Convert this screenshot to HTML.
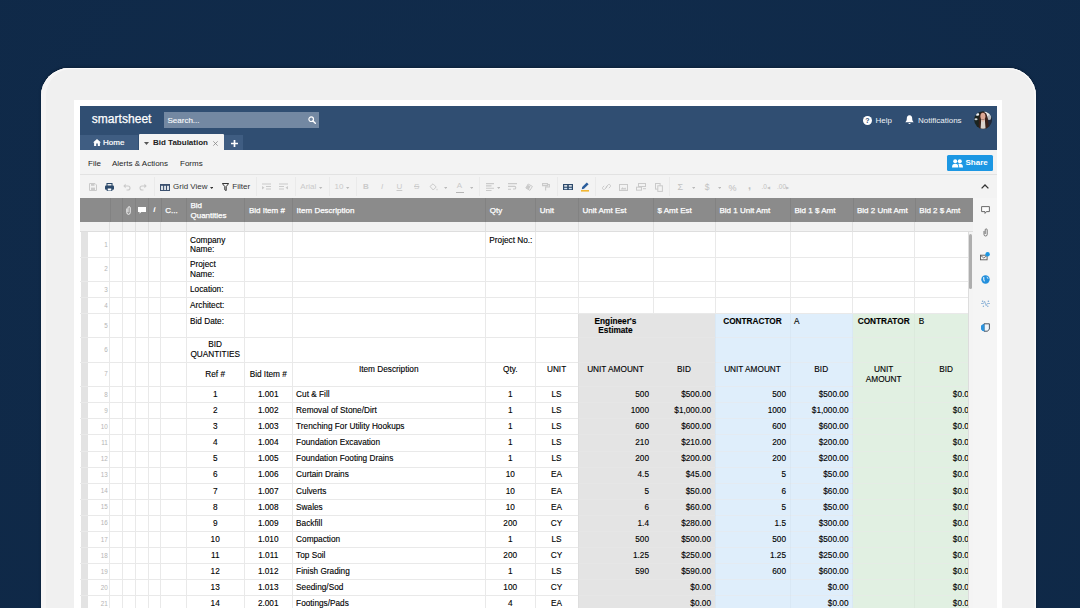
<!DOCTYPE html><html><head><meta charset="utf-8"><title>Smartsheet Bid Tabulation</title><style>
*{box-sizing:border-box;margin:0;padding:0}
html,body{width:1080px;height:608px;overflow:hidden}
body{position:relative;font-family:"Liberation Sans",Arial,sans-serif;background:#0f2947;background-image:radial-gradient(ellipse 1100px 900px at 50% 35%,#112c4c 0%,#0e2745 100%);}
.abs{position:absolute}
#frame{position:absolute;left:41px;top:68px;width:995px;height:600px;background:#f0f0f0;border-radius:28px;box-shadow:inset 0 1px 0 0 #fbfbfb,inset 5px 0 0 0 #f6f5f5,inset -1.5px 0 0 0 #fafafa,0 -1px 3px rgba(0,0,0,.25)}
#white{position:absolute;left:74px;top:99.5px;width:928px;height:520px;background:#fff}
#app{position:absolute;left:80px;top:106px;width:917px;height:510px;background:#fff;overflow:hidden}
/* inside app coordinates are page coords minus (80,106) */
#hdr{position:absolute;left:0;top:0;width:917px;height:44px;background:#304e72}
#logo{position:absolute;left:11.8px;top:6.3px;color:#fff;font-size:12px;letter-spacing:0.03px;line-height:14px;white-space:nowrap;-webkit-text-stroke:0.25px #fff}
#search{position:absolute;left:84px;top:6px;width:155px;height:16px;background:#7388a2;color:#f6f8fa;font-size:8px;line-height:17px;padding-left:3.5px;-webkit-text-stroke:0.15px #f6f8fa}
.tab{position:absolute;font-size:8px;line-height:16px;white-space:nowrap}
#menubar{position:absolute;left:0;top:44px;width:917px;height:25px;background:#f3f3f3;border-bottom:1px solid #e2e2e2}
#toolbar{position:absolute;left:0;top:69px;width:917px;height:22.5px;background:#f3f3f3}
.mi{position:absolute;top:0.5px;font-size:8px;line-height:25px;color:#262626}
.tsep{position:absolute;top:2px;width:1px;height:19px;background:#eaeaea}
.tt{position:absolute;font-size:8px;line-height:22px;top:1px;white-space:nowrap}
#ghead{position:absolute;left:0;top:91.5px;width:893px;height:24.5px;background:#8b8b8b}
.hc{position:absolute;top:0;height:24.5px;color:#fff;font-size:8px;line-height:10px;display:flex;align-items:center;padding-left:4px;padding-top:2.6px;white-space:nowrap;-webkit-text-stroke:0.25px #fff}
.hsep{position:absolute;top:0;width:1px;height:24.5px;background:#828282}
#side{position:absolute;left:893px;top:91.5px;width:24px;height:430px;background:#f5f5f5}
#grid{position:absolute;left:0;top:116px;width:887.5px;height:400px;background:#fff;overflow:hidden}
.c{position:absolute;font-size:8.25px;line-height:9.4px;color:#000;-webkit-text-stroke:0.12px #000;white-space:nowrap}
.rn{position:absolute;left:8px;width:21.9px;text-align:right;padding-right:2.2px;font-size:6.3px;color:#b4b4b4}
.vl{position:absolute;top:0;width:1px;height:400px;background:#e9e9e9}
.hl{position:absolute;left:0;height:1px;width:888px;background:#e9e9e9}
</style></head><body>
<div id="frame"></div><div id="white"></div><div id="app">
<div id="hdr">
<div id="logo">smartsheet</div>
<div id="search">Search...<svg class="abs" style="right:3.5px;top:4px" width="8" height="8" viewBox="0 0 8 8"><circle cx="3.2" cy="3.2" r="2.3" fill="none" stroke="#fff" stroke-width="1.2"/><path d="M5 5L7.3 7.3" stroke="#fff" stroke-width="1.4" stroke-linecap="round"/></svg></div>
<div class="abs" style="left:0;top:29px;width:58px;height:15px;background:#3f5d82"></div>
<svg class="abs" style="left:12.5px;top:32.5px" width="8" height="7" viewBox="0 0 8 7"><path d="M4 0L0 3.6H1.1V7H3.2V4.6H4.8V7H6.9V3.6H8Z" fill="#fff"/></svg>
<div class="tab" style="left:23px;top:29px;color:#fff;-webkit-text-stroke:0.2px #fff">Home</div>
<div class="abs" style="left:58.5px;top:28px;width:85px;height:16px;background:#f3f3f3;border-radius:1px 1px 0 0"></div>
<svg class="abs" style="left:64px;top:35.5px" width="5" height="3" viewBox="0 0 5 3"><path d="M0 0H5L2.5 3Z" fill="#555"/></svg>
<div class="tab" style="left:73px;top:29px;color:#222;font-weight:bold">Bid Tabulation</div>
<svg class="abs" style="left:132.5px;top:34.5px" width="5" height="5" viewBox="0 0 5 5"><path d="M0.3 0.3L4.7 4.7M4.7 0.3L0.3 4.7" stroke="#888" stroke-width="0.8"/></svg>
<div class="abs" style="left:144px;top:29px;width:19px;height:15px;background:#3f5d82"></div>
<svg class="abs" style="left:150.5px;top:33.5px" width="7" height="7" viewBox="0 0 7 7"><path d="M3.5 0V7M0 3.5H7" stroke="#fff" stroke-width="1.7"/></svg>
<svg class="abs" style="left:783px;top:9.5px" width="9" height="9" viewBox="0 0 9 9"><circle cx="4.5" cy="4.5" r="4.5" fill="#fff"/><text x="4.5" y="7.2" font-size="7" font-weight="bold" text-anchor="middle" fill="#304e72" font-family="Liberation Sans,sans-serif">?</text></svg>
<div class="tab" style="left:795.5px;top:6.5px;color:#edf1f5">Help</div>
<svg class="abs" style="left:825px;top:9px" width="9" height="10" viewBox="0 0 9 10"><path d="M4.5 0.3C2.6 0.3 1.8 1.8 1.8 3.6C1.8 5.6 1.2 6.4 0.3 7.3H8.7C7.8 6.4 7.2 5.6 7.2 3.6C7.2 1.8 6.4 0.3 4.5 0.3ZM3.4 8A1.1 1.1 0 0 0 5.6 8Z" fill="#fff"/></svg>
<div class="tab" style="left:838px;top:6.5px;color:#edf1f5">Notifications</div>
<svg class="abs" style="left:893.7px;top:4.9px" width="18" height="18" viewBox="0 0 18 18"><defs><clipPath id="av"><circle cx="9" cy="9" r="8.8"/></clipPath></defs><g clip-path="url(#av)"><rect width="18" height="18" fill="#1b2420"/><rect x="11" y="8" width="7" height="10" fill="#232a3c"/><ellipse cx="13.5" cy="3.2" rx="4.2" ry="3.6" fill="#e9ecef"/><ellipse cx="15.2" cy="6.5" rx="2" ry="2.5" fill="#b8bcc0"/><ellipse cx="3.4" cy="3.4" rx="1.7" ry="1.4" fill="#f2f4f6"/><ellipse cx="2" cy="8.2" rx="1.6" ry="1" fill="#cfd3d6"/><path d="M5.2 18C4.2 12 5 5 6.2 2.6C7.4 0.6 11 0.4 12.2 2.6C13.8 5.5 14.4 12 14.8 18Z" fill="#3a211b"/><ellipse cx="8.9" cy="5.2" rx="2.5" ry="3.5" fill="#dba794"/><path d="M7.2 8.2C8 9.2 10 9.2 10.8 8L11.6 18H6.6Z" fill="#d9d2cc"/><path d="M7.4 8.4C8.2 9.4 9.8 9.4 10.6 8.2L10 10.5H8Z" fill="#e6b8a6"/></g></svg>
</div>
<div id="menubar">
<div class="mi" style="left:8px">File</div><div class="mi" style="left:32px">Alerts &amp; Actions</div><div class="mi" style="left:100px">Forms</div>
<div class="abs" style="left:867px;top:5px;width:46px;height:16px;background:#1c97e3;border-radius:1.5px"></div>
<svg class="abs" style="left:872px;top:8.5px" width="11" height="9" viewBox="0 0 11 9"><circle cx="3.2" cy="2.2" r="2" fill="#fff"/><path d="M0 8.5C0 5.8 1.2 4.8 3.2 4.8C5.2 4.8 6.4 5.8 6.4 8.5Z" fill="#fff"/><circle cx="7.8" cy="2.2" r="2" fill="#fff"/><path d="M6.2 4.9C6.7 4.8 7.2 4.8 7.8 4.8C9.8 4.8 11 5.8 11 8.5H7.2C7.2 6.8 6.9 5.6 6.2 4.9Z" fill="#fff"/></svg>
<div class="abs" style="left:885.5px;top:5px;font-size:8px;line-height:16px;color:#fff;font-weight:bold">Share</div>
</div>
<div id="toolbar">
<svg class="abs" style="left:9.00px;top:8.20px" width="8" height="8" viewBox="0 0 8 8"><path d="M0.5 0.5H6L7.5 2V7.5H0.5Z" fill="none" stroke="#cacaca" stroke-width="1"/><rect x="2" y="0.5" width="3.5" height="2.3" fill="#cacaca"/><rect x="2" y="4.6" width="4" height="2.9" fill="#cacaca"/></svg>
<svg class="abs" style="left:25.40px;top:7.90px" width="9" height="8.6" viewBox="0 0 9 8.6"><rect x="2" y="0.5" width="5" height="3" fill="none" stroke="#2d4a6b" stroke-width="1.1"/><rect x="0" y="2.6" width="9" height="4.2" rx="1" fill="#2d4a6b"/><rect x="2.2" y="5" width="4.6" height="3" fill="#fff" stroke="#2d4a6b" stroke-width="1"/></svg>
<svg class="abs" style="left:42.70px;top:8.20px" width="8" height="8" viewBox="0 0 8 8"><path d="M1 3H5A2 2 0 0 1 5 7H3.5" fill="none" stroke="#cacaca" stroke-width="1.1"/><path d="M2.6 0.8L0.3 3L2.6 5.2Z" fill="#cacaca"/></svg>
<svg class="abs" style="left:59.00px;top:8.20px" width="8" height="8" viewBox="0 0 8 8"><path d="M7 3H3A2 2 0 0 0 3 7H4.5" fill="none" stroke="#cacaca" stroke-width="1.1"/><path d="M5.4 0.8L7.7 3L5.4 5.2Z" fill="#cacaca"/></svg>
<div class="tsep" style="left:74px"></div>
<div class="tsep" style="left:175.5px"></div>
<div class="tsep" style="left:214.7px"></div>
<div class="tsep" style="left:249px"></div>
<div class="tsep" style="left:275.5px"></div>
<div class="tsep" style="left:399.2px"></div>
<div class="tsep" style="left:477px"></div>
<div class="tsep" style="left:515px"></div>
<div class="tsep" style="left:588.7px"></div>
<svg class="abs" style="left:79.90px;top:8.70px" width="10" height="7" viewBox="0 0 10 7"><rect x="0.5" y="0.5" width="9" height="6" fill="#dfe4ea" stroke="#3d5270" stroke-width="1"/><rect x="0.5" y="0.3" width="9" height="1.5" fill="#3d5270"/><path d="M3.6 1V6.4M6.5 1V6.4" stroke="#3d5270" stroke-width="1"/></svg>
<div class="tt" style="left:93px;color:#333">Grid View</div>
<svg class="abs" style="left:130.10px;top:11.70px" width="3.4" height="2" viewBox="0 0 3.4 2"><path d="M0 0H3.4L1.7 2Z" fill="#333"/></svg>
<svg class="abs" style="left:142.00px;top:8.20px" width="7" height="8" viewBox="0 0 7 8"><path d="M0.3 0.5H6.7L4.2 3.6V7.6L2.8 6.8V3.6Z" fill="none" stroke="#333" stroke-width="1"/></svg>
<div class="tt" style="left:152.3px;color:#333">Filter</div>
<svg class="abs" style="left:182.00px;top:8.20px" width="9" height="8" viewBox="0 0 9 8"><path d="M0 1H9M4 3.5H9M4 6H9" stroke="#cacaca" stroke-width="1.1"/><path d="M0 3L2.5 4.8L0 6.6Z" fill="#cacaca"/></svg>
<svg class="abs" style="left:199.00px;top:8.20px" width="9" height="8" viewBox="0 0 9 8"><path d="M0 1H9M0 3.5H5M0 6H5" stroke="#cacaca" stroke-width="1.1"/><path d="M9 3L6.5 4.8L9 6.6Z" fill="#cacaca"/></svg>
<div class="tt" style="left:220.3px;color:#cacaca">Arial</div>
<svg class="abs" style="left:239.30px;top:11.70px" width="3.4" height="2" viewBox="0 0 3.4 2"><path d="M0 0H3.4L1.7 2Z" fill="#bbb"/></svg>
<div class="tt" style="left:254.5px;color:#cacaca">10</div>
<svg class="abs" style="left:266.30px;top:11.70px" width="3.4" height="2" viewBox="0 0 3.4 2"><path d="M0 0H3.4L1.7 2Z" fill="#bbb"/></svg>
<div class="tt" style="left:283px;color:#cacaca;font-weight:bold">B</div>
<div class="tt" style="left:301px;color:#cacaca;font-style:italic">I</div>
<div class="tt" style="left:316.5px;color:#cacaca;text-decoration:underline">U</div>
<div class="tt" style="left:334px;color:#cacaca;text-decoration:line-through">S</div>
<svg class="abs" style="left:349.20px;top:8.20px" width="9" height="8" viewBox="0 0 9 8"><path d="M1 3.5L4 0.8L7.2 4L4.2 7L1 3.5Z" fill="none" stroke="#cacaca" stroke-width="1"/><path d="M8 5.5C8.6 6.4 8.8 7 8 7.4C7.2 7 7.4 6.4 8 5.5Z" fill="#cacaca"/></svg>
<svg class="abs" style="left:363.80px;top:11.70px" width="3.4" height="2" viewBox="0 0 3.4 2"><path d="M0 0H3.4L1.7 2Z" fill="#bbb"/></svg>
<div class="tt" style="left:376.8px;color:#cacaca;top:0px">A</div>
<div class="abs" style="left:376px;top:17px;width:7.5px;height:1.3px;background:#b5b5b5"></div>
<svg class="abs" style="left:390.00px;top:11.70px" width="3.4" height="2" viewBox="0 0 3.4 2"><path d="M0 0H3.4L1.7 2Z" fill="#bbb"/></svg>
<svg class="abs" style="left:405.50px;top:8.20px" width="8" height="8" viewBox="0 0 8 8"><path d="M0 0.6H8M0 2.9H5.5M0 5.2H8M0 7.5H5.5" stroke="#cacaca" stroke-width="1.1"/></svg>
<svg class="abs" style="left:417.00px;top:11.70px" width="3.4" height="2" viewBox="0 0 3.4 2"><path d="M0 0H3.4L1.7 2Z" fill="#bbb"/></svg>
<svg class="abs" style="left:428.00px;top:8.20px" width="9" height="8" viewBox="0 0 9 8"><path d="M0 0.6H9M0 3.4H6.5A1.3 1.3 0 0 1 6.5 6H5M0 6.2H3" fill="none" stroke="#cacaca" stroke-width="1.1"/></svg>
<svg class="abs" style="left:445.20px;top:8.20px" width="8" height="8" viewBox="0 0 8 8"><path d="M3.2 1L7.4 3.4L5 7.4L0.8 5Z" fill="none" stroke="#cacaca" stroke-width="1"/><path d="M0.8 5L2.8 1.8L5.6 3.4L3.6 6.6Z" fill="#cacaca"/></svg>
<svg class="abs" style="left:462.20px;top:8.20px" width="8" height="8" viewBox="0 0 8 8"><path d="M0.5 0.6H5.5V2.6H0.5ZM5.5 1.6H7.4V4H3.6V7.6" fill="none" stroke="#cacaca" stroke-width="1.1"/></svg>
<svg class="abs" style="left:483.00px;top:9.00px" width="10" height="6.4" viewBox="0 0 10 6.4"><rect x="0" y="0" width="10" height="6.4" fill="#2d4a6b"/><rect x="1.2" y="1.2" width="3" height="1.4" fill="#fff"/><rect x="5.8" y="1.2" width="3" height="1.4" fill="#fff"/><rect x="1.2" y="3.8" width="3" height="1.4" fill="#cfe1f3"/><rect x="5.8" y="3.8" width="3" height="1.4" fill="#cfe1f3"/></svg>
<svg class="abs" style="left:501.00px;top:7.20px" width="8" height="10" viewBox="0 0 8 10"><path d="M5.8 0.4L7.6 2.2L3 6.8L0.8 7.2L1.2 5Z" fill="#2a5d9c"/><rect x="0" y="8" width="8" height="1.6" fill="#f2b632"/></svg>
<svg class="abs" style="left:521.70px;top:8.20px" width="9" height="8" viewBox="0 0 9 8"><path d="M3.6 4.4L6.4 1.6A1.5 1.5 0 0 1 8.4 3.6L6.8 5.2M5.4 3.6L2.6 6.4A1.5 1.5 0 0 1 0.6 4.4L2.2 2.8" fill="none" stroke="#cacaca" stroke-width="1"/></svg>
<svg class="abs" style="left:538.50px;top:8.70px" width="9" height="7" viewBox="0 0 9 7"><rect x="0.5" y="0.5" width="8" height="6" fill="none" stroke="#cacaca" stroke-width="1"/><path d="M1.5 5.5L3.5 3.2L5 4.6L6.2 3.6L7.6 5.5Z" fill="#cacaca"/></svg>
<svg class="abs" style="left:556.20px;top:8.20px" width="10" height="8" viewBox="0 0 10 8"><rect x="2.5" y="0.5" width="7" height="3" fill="none" stroke="#cacaca" stroke-width="1"/><rect x="0.5" y="4.2" width="5" height="3" fill="none" stroke="#cacaca" stroke-width="1"/><path d="M7 5.7H10" stroke="#cacaca" stroke-width="1"/></svg>
<svg class="abs" style="left:574.70px;top:7.70px" width="8" height="9" viewBox="0 0 8 9"><rect x="0.5" y="0.5" width="4.6" height="5.6" fill="none" stroke="#cacaca" stroke-width="1"/><rect x="2.8" y="2.8" width="4.6" height="5.6" fill="#f3f3f3" stroke="#cacaca" stroke-width="1"/></svg>
<div class="tt" style="left:597.5px;color:#c2c2c2;font-size:9px">&#931;</div>
<svg class="abs" style="left:611.50px;top:11.70px" width="3.4" height="2" viewBox="0 0 3.4 2"><path d="M0 0H3.4L1.7 2Z" fill="#bbb"/></svg>
<div class="tt" style="left:624.7px;color:#c2c2c2;font-size:8.5px">$</div>
<svg class="abs" style="left:637.50px;top:11.70px" width="3.4" height="2" viewBox="0 0 3.4 2"><path d="M0 0H3.4L1.7 2Z" fill="#bbb"/></svg>
<div class="tt" style="left:648.5px;color:#bdbdbd;font-size:9px;top:1.5px">%</div>
<div class="tt" style="left:668px;color:#c2c2c2;font-weight:bold;font-size:11px;top:-1.5px">,</div>
<div class="tt" style="left:681.5px;color:#c2c2c2;font-size:6.5px">.0<span style="font-size:4px">&#9664;</span></div>
<div class="tt" style="left:697px;color:#c2c2c2;font-size:6.5px">.00<span style="font-size:4px">&#9654;</span></div>
<svg class="abs" style="left:900.50px;top:9.30px" width="8" height="5.4" viewBox="0 0 8 5.4"><path d="M0.6 4.4L4 1L7.4 4.4" fill="none" stroke="#333" stroke-width="1.3"/></svg>
</div>
<div id="ghead">
<div class="hsep" style="left:29.900000000000006px"></div>
<div class="hsep" style="left:42.400000000000006px"></div>
<div class="hsep" style="left:55.400000000000006px"></div>
<div class="hsep" style="left:68px"></div>
<div class="hsep" style="left:80.69999999999999px"></div>
<div class="hsep" style="left:106px"></div>
<div class="hsep" style="left:164.4px"></div>
<div class="hsep" style="left:212.10000000000002px"></div>
<div class="hsep" style="left:405.3px"></div>
<div class="hsep" style="left:455.20000000000005px"></div>
<div class="hsep" style="left:498px"></div>
<div class="hsep" style="left:573px"></div>
<div class="hsep" style="left:635px"></div>
<div class="hsep" style="left:710px"></div>
<div class="hsep" style="left:772.5px"></div>
<div class="hsep" style="left:834.8px"></div>
<div class="hc" style="left:81.19999999999999px">C...</div>
<div class="hc" style="left:106.5px">Bid<br>Quantities</div>
<div class="hc" style="left:164.9px">Bid Item #</div>
<div class="hc" style="left:212.60000000000002px">Item Description</div>
<div class="hc" style="left:405.8px">Qty</div>
<div class="hc" style="left:455.70000000000005px">Unit</div>
<div class="hc" style="left:498.5px">Unit Amt Est</div>
<div class="hc" style="left:573.5px">$ Amt Est</div>
<div class="hc" style="left:635.5px">Bid 1 Unit Amt</div>
<div class="hc" style="left:710.5px">Bid 1 $ Amt</div>
<div class="hc" style="left:773.0px">Bid 2 Unit Amt</div>
<div class="hc" style="left:835.3px">Bid 2 $ Amt</div>
<svg class="abs" style="left:46px;top:8px" width="5" height="9" viewBox="0 0 5 9"><path d="M0.8 2.5V6.6A1.7 1.7 0 0 0 4.2 6.6V1.8A1.1 1.1 0 0 0 2 1.8V6.3" fill="none" stroke="#fff" stroke-width="0.9"/></svg>
<svg class="abs" style="left:58px;top:9px" width="8" height="7" viewBox="0 0 8 7"><path d="M0 0H8V5H3.2L1.6 6.8V5H0Z" fill="#fff"/></svg>
<div class="abs" style="left:73.3px;top:0.6px;line-height:24.5px;color:#fff;font-size:8px;font-style:italic;font-weight:bold">i</div>
</div>
<div id="side">
<svg class="abs" style="left:7.5px;top:8.5px" width="9" height="8" viewBox="0 0 9 8"><path d="M0.6 0.6H8.4V5.6H5.4L4 7.4V5.6H0.6Z" fill="#fdfdfd" stroke="#5a5a5a" stroke-width="0.9"/></svg>
<svg class="abs" style="left:9.5px;top:30.7px" width="5" height="9" viewBox="0 0 5 9"><path d="M1 3V6.4A1.6 1.6 0 0 0 4.2 6.4V1.9A1 1 0 0 0 2.2 1.9V6" fill="none" stroke="#6a6a6a" stroke-width="0.9"/></svg>
<svg class="abs" style="left:7.0px;top:54.6px" width="10" height="9" viewBox="0 0 10 9"><rect x="0.5" y="3.2" width="6.6" height="4.6" fill="none" stroke="#5a5a5a" stroke-width="0.9"/><path d="M0.5 3.4L3.8 6L7.1 3.4" fill="none" stroke="#5a5a5a" stroke-width="0.8"/><circle cx="7.6" cy="2.3" r="2.2" fill="#1c97e3"/></svg>
<svg class="abs" style="left:7.5px;top:77.7px" width="9" height="9" viewBox="0 0 9 9"><circle cx="4.5" cy="4.5" r="4.2" fill="#238fdc"/><path d="M2 2.2C3 1.6 4 2.6 3.4 3.6C2.8 4.6 4.2 5 4 6.4C3 7 1.6 5 2 2.200Z" fill="#c9e5f8"/><path d="M5.6 1.6C6.8 2 7.6 3 7.4 4C6.6 4 5.6 3 5.6 1.6Z" fill="#c9e5f8"/></svg>
<svg class="abs" style="left:7.5px;top:101.8px" width="9" height="9" viewBox="0 0 9 9"><path d="M0 4.5H2.6L3.6 2.2L5.2 6.8L6.2 4.5H9" fill="none" stroke="#8fb4d8" stroke-width="0.9"/><circle cx="1.6" cy="2.2" r="0.8" fill="#7fa9d3"/><circle cx="7.4" cy="2.2" r="0.8" fill="#7fa9d3"/><circle cx="2.4" cy="7.2" r="0.7" fill="#7fa9d3"/><circle cx="6.8" cy="7.2" r="0.7" fill="#7fa9d3"/></svg>
<svg class="abs" style="left:7.5px;top:125.2px" width="9" height="9" viewBox="0 0 9 9"><circle cx="3.6" cy="4.6" r="3.6" fill="#2a93de"/><path d="M3 0.8H8.4V6L6.6 8.2H3Z" fill="#eef5fb" stroke="#3a4654" stroke-width="0.9"/><path d="M0.4 2.5A3.6 3.6 0 0 0 3.4 8.2V1Z" fill="#2a93de"/></svg>
</div>
<div id="grid">
<div class="abs" style="left:0.5px;top:10px;width:7.5px;height:390px;background:#e3e3e3"></div>
<div class="abs" style="left:498px;top:91.5px;width:137px;height:300px;background:#e4e4e4"></div>
<div class="abs" style="left:635px;top:91.5px;width:137.5px;height:300px;background:#dfeefb"></div>
<div class="abs" style="left:772.5px;top:91.5px;width:115.5px;height:300px;background:#e1f0e2"></div>
<div class="hl" style="top:34.5px"></div>
<div class="hl" style="top:59.0px"></div>
<div class="hl" style="top:75.0px"></div>
<div class="hl" style="top:91.0px"></div>
<div class="hl" style="top:115.0px"></div>
<div class="hl" style="top:139.5px"></div>
<div class="hl" style="top:164.2px"></div>
<div class="hl" style="top:180.29px"></div>
<div class="hl" style="top:196.38px"></div>
<div class="hl" style="top:212.47px"></div>
<div class="hl" style="top:228.56px"></div>
<div class="hl" style="top:244.65px"></div>
<div class="hl" style="top:260.74px"></div>
<div class="hl" style="top:276.83px"></div>
<div class="hl" style="top:292.92px"></div>
<div class="hl" style="top:309.01px"></div>
<div class="hl" style="top:325.1px"></div>
<div class="hl" style="top:341.19px"></div>
<div class="hl" style="top:357.28px"></div>
<div class="hl" style="top:373.37px"></div>
<div class="hl" style="top:389.46px"></div>
<div class="hl" style="top:405.55px"></div>
<div class="abs" style="left:498px;top:92.5px;width:137px;height:300px;background:rgba(228,228,228,.6)"></div>
<div class="abs" style="left:635px;top:92.5px;width:137.5px;height:300px;background:rgba(223,238,251,.5)"></div>
<div class="abs" style="left:772.5px;top:92.5px;width:115.5px;height:300px;background:rgba(225,240,226,.5)"></div>
<div class="vl" style="left:29.4px"></div>
<div class="vl" style="left:41.9px"></div>
<div class="vl" style="left:54.9px"></div>
<div class="vl" style="left:67.5px"></div>
<div class="vl" style="left:80.2px"></div>
<div class="vl" style="left:105.5px"></div>
<div class="vl" style="left:163.9px"></div>
<div class="vl" style="left:211.6px"></div>
<div class="vl" style="left:404.8px"></div>
<div class="vl" style="left:454.7px"></div>
<div class="vl" style="left:497.5px;height:91.5px"></div>
<div class="vl" style="left:497.5px;top:91.5px;background:rgba(0,0,0,.025)"></div>
<div class="vl" style="left:572.5px;height:91.5px"></div>
<div class="vl" style="left:634.5px;height:91.5px"></div>
<div class="vl" style="left:634.5px;top:91.5px;background:rgba(0,0,0,.025)"></div>
<div class="vl" style="left:709.5px;height:91.5px"></div>
<div class="vl" style="left:709.5px;top:91.5px;background:rgba(0,0,0,.025)"></div>
<div class="vl" style="left:772.0px;height:91.5px"></div>
<div class="vl" style="left:772.0px;top:91.5px;background:rgba(0,0,0,.025)"></div>
<div class="vl" style="left:834.3px;height:91.5px"></div>
<div class="vl" style="left:834.3px;top:91.5px;background:rgba(0,0,0,.025)"></div>
<div class="rn" style="top:18.50px;line-height:7px">1</div>
<div class="rn" style="top:43.25px;line-height:7px">2</div>
<div class="rn" style="top:63.50px;line-height:7px">3</div>
<div class="rn" style="top:79.50px;line-height:7px">4</div>
<div class="rn" style="top:99.50px;line-height:7px">5</div>
<div class="rn" style="top:123.75px;line-height:7px">6</div>
<div class="rn" style="top:148.35px;line-height:7px">7</div>
<div class="rn" style="top:168.75px;line-height:7px">8</div>
<div class="rn" style="top:184.84px;line-height:7px">9</div>
<div class="rn" style="top:200.93px;line-height:7px">10</div>
<div class="rn" style="top:217.01px;line-height:7px">11</div>
<div class="rn" style="top:233.11px;line-height:7px">12</div>
<div class="rn" style="top:249.19px;line-height:7px">13</div>
<div class="rn" style="top:265.28px;line-height:7px">14</div>
<div class="rn" style="top:281.38px;line-height:7px">15</div>
<div class="rn" style="top:297.46px;line-height:7px">16</div>
<div class="rn" style="top:313.56px;line-height:7px">17</div>
<div class="rn" style="top:329.64px;line-height:7px">18</div>
<div class="rn" style="top:345.74px;line-height:7px">19</div>
<div class="rn" style="top:361.83px;line-height:7px">20</div>
<div class="rn" style="top:377.91px;line-height:7px">21</div>
<div class="rn" style="top:394.00px;line-height:7px">22</div>
<div class="c" style="top:13.60px;left:110.0px;text-align:left;">Company<br>Name:</div>
<div class="c" style="top:13.60px;left:409.3px;text-align:left;">Project No.:</div>
<div class="c" style="top:38.30px;left:110.0px;text-align:left;">Project<br>Name:</div>
<div class="c" style="top:62.80px;left:110.0px;text-align:left;">Location:</div>
<div class="c" style="top:78.80px;left:110.0px;text-align:left;">Architect:</div>
<div class="c" style="top:94.80px;left:110.0px;text-align:left;">Bid Date:</div>
<div class="c" style="top:94.80px;left:498px;width:75px;text-align:center;font-weight:bold;">Engineer's<br>Estimate</div>
<div class="c" style="top:94.80px;left:635px;width:75px;text-align:center;font-weight:bold;">CONTRACTOR</div>
<div class="c" style="top:94.80px;left:714.0px;text-align:left;">A</div>
<div class="c" style="top:94.80px;left:772.5px;width:62.299999999999955px;text-align:center;font-weight:bold;">CONTRATOR</div>
<div class="c" style="top:94.80px;left:838.8px;text-align:left;">B</div>
<div class="c" style="top:118.35px;left:106px;width:58.400000000000006px;text-align:center;">BID<br>QUANTITIES</div>
<div class="c" style="top:147.65px;left:106px;width:58.400000000000006px;text-align:center;">Ref #</div>
<div class="c" style="top:147.65px;left:164.4px;width:47.70000000000002px;text-align:center;">Bid Item #</div>
<div class="c" style="top:143.30px;left:212.1px;width:193.2px;text-align:center;">Item Description</div>
<div class="c" style="top:143.30px;left:405.3px;width:49.900000000000034px;text-align:center;">Qty.</div>
<div class="c" style="top:143.30px;left:455.2px;width:42.799999999999955px;text-align:center;">UNIT</div>
<div class="c" style="top:143.30px;left:498px;width:75px;text-align:center;">UNIT AMOUNT</div>
<div class="c" style="top:143.30px;left:573px;width:62px;text-align:center;">BID</div>
<div class="c" style="top:143.30px;left:635px;width:75px;text-align:center;">UNIT AMOUNT</div>
<div class="c" style="top:143.30px;left:710px;width:62.5px;text-align:center;">BID</div>
<div class="c" style="top:143.30px;left:772.5px;width:62.299999999999955px;text-align:center;">UNIT<br>AMOUNT</div>
<div class="c" style="top:143.30px;left:834.8px;width:62.700000000000045px;text-align:center;">BID</div>
<div class="c" style="top:168.00px;left:106px;width:58.400000000000006px;text-align:center;">1</div>
<div class="c" style="top:168.00px;left:164.4px;width:47.70000000000002px;text-align:center;">1.001</div>
<div class="c" style="top:168.00px;left:216.1px;text-align:left;">Cut &amp; Fill</div>
<div class="c" style="top:168.00px;left:405.3px;width:49.900000000000034px;text-align:center;">1</div>
<div class="c" style="top:168.00px;left:455.2px;width:42.799999999999955px;text-align:center;">LS</div>
<div class="c" style="top:168.00px;left:498px;width:71.0px;text-align:right;">500</div>
<div class="c" style="top:168.00px;left:573px;width:58.0px;text-align:right;">$500.00</div>
<div class="c" style="top:168.00px;left:635px;width:71.0px;text-align:right;">500</div>
<div class="c" style="top:168.00px;left:710px;width:58.5px;text-align:right;">$500.00</div>
<div class="c" style="top:168.00px;left:834.8px;width:58.700000000000045px;text-align:right;">$0.00</div>
<div class="c" style="top:184.09px;left:106px;width:58.400000000000006px;text-align:center;">2</div>
<div class="c" style="top:184.09px;left:164.4px;width:47.70000000000002px;text-align:center;">1.002</div>
<div class="c" style="top:184.09px;left:216.1px;text-align:left;">Removal of Stone/Dirt</div>
<div class="c" style="top:184.09px;left:405.3px;width:49.900000000000034px;text-align:center;">1</div>
<div class="c" style="top:184.09px;left:455.2px;width:42.799999999999955px;text-align:center;">LS</div>
<div class="c" style="top:184.09px;left:498px;width:71.0px;text-align:right;">1000</div>
<div class="c" style="top:184.09px;left:573px;width:58.0px;text-align:right;">$1,000.00</div>
<div class="c" style="top:184.09px;left:635px;width:71.0px;text-align:right;">1000</div>
<div class="c" style="top:184.09px;left:710px;width:58.5px;text-align:right;">$1,000.00</div>
<div class="c" style="top:184.09px;left:834.8px;width:58.700000000000045px;text-align:right;">$0.00</div>
<div class="c" style="top:200.18px;left:106px;width:58.400000000000006px;text-align:center;">3</div>
<div class="c" style="top:200.18px;left:164.4px;width:47.70000000000002px;text-align:center;">1.003</div>
<div class="c" style="top:200.18px;left:216.1px;text-align:left;">Trenching For Utility Hookups</div>
<div class="c" style="top:200.18px;left:405.3px;width:49.900000000000034px;text-align:center;">1</div>
<div class="c" style="top:200.18px;left:455.2px;width:42.799999999999955px;text-align:center;">LS</div>
<div class="c" style="top:200.18px;left:498px;width:71.0px;text-align:right;">600</div>
<div class="c" style="top:200.18px;left:573px;width:58.0px;text-align:right;">$600.00</div>
<div class="c" style="top:200.18px;left:635px;width:71.0px;text-align:right;">600</div>
<div class="c" style="top:200.18px;left:710px;width:58.5px;text-align:right;">$600.00</div>
<div class="c" style="top:200.18px;left:834.8px;width:58.700000000000045px;text-align:right;">$0.00</div>
<div class="c" style="top:216.27px;left:106px;width:58.400000000000006px;text-align:center;">4</div>
<div class="c" style="top:216.27px;left:164.4px;width:47.70000000000002px;text-align:center;">1.004</div>
<div class="c" style="top:216.27px;left:216.1px;text-align:left;">Foundation Excavation</div>
<div class="c" style="top:216.27px;left:405.3px;width:49.900000000000034px;text-align:center;">1</div>
<div class="c" style="top:216.27px;left:455.2px;width:42.799999999999955px;text-align:center;">LS</div>
<div class="c" style="top:216.27px;left:498px;width:71.0px;text-align:right;">210</div>
<div class="c" style="top:216.27px;left:573px;width:58.0px;text-align:right;">$210.00</div>
<div class="c" style="top:216.27px;left:635px;width:71.0px;text-align:right;">200</div>
<div class="c" style="top:216.27px;left:710px;width:58.5px;text-align:right;">$200.00</div>
<div class="c" style="top:216.27px;left:834.8px;width:58.700000000000045px;text-align:right;">$0.00</div>
<div class="c" style="top:232.36px;left:106px;width:58.400000000000006px;text-align:center;">5</div>
<div class="c" style="top:232.36px;left:164.4px;width:47.70000000000002px;text-align:center;">1.005</div>
<div class="c" style="top:232.36px;left:216.1px;text-align:left;">Foundation Footing Drains</div>
<div class="c" style="top:232.36px;left:405.3px;width:49.900000000000034px;text-align:center;">1</div>
<div class="c" style="top:232.36px;left:455.2px;width:42.799999999999955px;text-align:center;">LS</div>
<div class="c" style="top:232.36px;left:498px;width:71.0px;text-align:right;">200</div>
<div class="c" style="top:232.36px;left:573px;width:58.0px;text-align:right;">$200.00</div>
<div class="c" style="top:232.36px;left:635px;width:71.0px;text-align:right;">200</div>
<div class="c" style="top:232.36px;left:710px;width:58.5px;text-align:right;">$200.00</div>
<div class="c" style="top:232.36px;left:834.8px;width:58.700000000000045px;text-align:right;">$0.00</div>
<div class="c" style="top:248.45px;left:106px;width:58.400000000000006px;text-align:center;">6</div>
<div class="c" style="top:248.45px;left:164.4px;width:47.70000000000002px;text-align:center;">1.006</div>
<div class="c" style="top:248.45px;left:216.1px;text-align:left;">Curtain Drains</div>
<div class="c" style="top:248.45px;left:405.3px;width:49.900000000000034px;text-align:center;">10</div>
<div class="c" style="top:248.45px;left:455.2px;width:42.799999999999955px;text-align:center;">EA</div>
<div class="c" style="top:248.45px;left:498px;width:71.0px;text-align:right;">4.5</div>
<div class="c" style="top:248.45px;left:573px;width:58.0px;text-align:right;">$45.00</div>
<div class="c" style="top:248.45px;left:635px;width:71.0px;text-align:right;">5</div>
<div class="c" style="top:248.45px;left:710px;width:58.5px;text-align:right;">$50.00</div>
<div class="c" style="top:248.45px;left:834.8px;width:58.700000000000045px;text-align:right;">$0.00</div>
<div class="c" style="top:264.54px;left:106px;width:58.400000000000006px;text-align:center;">7</div>
<div class="c" style="top:264.54px;left:164.4px;width:47.70000000000002px;text-align:center;">1.007</div>
<div class="c" style="top:264.54px;left:216.1px;text-align:left;">Culverts</div>
<div class="c" style="top:264.54px;left:405.3px;width:49.900000000000034px;text-align:center;">10</div>
<div class="c" style="top:264.54px;left:455.2px;width:42.799999999999955px;text-align:center;">EA</div>
<div class="c" style="top:264.54px;left:498px;width:71.0px;text-align:right;">5</div>
<div class="c" style="top:264.54px;left:573px;width:58.0px;text-align:right;">$50.00</div>
<div class="c" style="top:264.54px;left:635px;width:71.0px;text-align:right;">6</div>
<div class="c" style="top:264.54px;left:710px;width:58.5px;text-align:right;">$60.00</div>
<div class="c" style="top:264.54px;left:834.8px;width:58.700000000000045px;text-align:right;">$0.00</div>
<div class="c" style="top:280.63px;left:106px;width:58.400000000000006px;text-align:center;">8</div>
<div class="c" style="top:280.63px;left:164.4px;width:47.70000000000002px;text-align:center;">1.008</div>
<div class="c" style="top:280.63px;left:216.1px;text-align:left;">Swales</div>
<div class="c" style="top:280.63px;left:405.3px;width:49.900000000000034px;text-align:center;">10</div>
<div class="c" style="top:280.63px;left:455.2px;width:42.799999999999955px;text-align:center;">EA</div>
<div class="c" style="top:280.63px;left:498px;width:71.0px;text-align:right;">6</div>
<div class="c" style="top:280.63px;left:573px;width:58.0px;text-align:right;">$60.00</div>
<div class="c" style="top:280.63px;left:635px;width:71.0px;text-align:right;">5</div>
<div class="c" style="top:280.63px;left:710px;width:58.5px;text-align:right;">$50.00</div>
<div class="c" style="top:280.63px;left:834.8px;width:58.700000000000045px;text-align:right;">$0.00</div>
<div class="c" style="top:296.72px;left:106px;width:58.400000000000006px;text-align:center;">9</div>
<div class="c" style="top:296.72px;left:164.4px;width:47.70000000000002px;text-align:center;">1.009</div>
<div class="c" style="top:296.72px;left:216.1px;text-align:left;">Backfill</div>
<div class="c" style="top:296.72px;left:405.3px;width:49.900000000000034px;text-align:center;">200</div>
<div class="c" style="top:296.72px;left:455.2px;width:42.799999999999955px;text-align:center;">CY</div>
<div class="c" style="top:296.72px;left:498px;width:71.0px;text-align:right;">1.4</div>
<div class="c" style="top:296.72px;left:573px;width:58.0px;text-align:right;">$280.00</div>
<div class="c" style="top:296.72px;left:635px;width:71.0px;text-align:right;">1.5</div>
<div class="c" style="top:296.72px;left:710px;width:58.5px;text-align:right;">$300.00</div>
<div class="c" style="top:296.72px;left:834.8px;width:58.700000000000045px;text-align:right;">$0.00</div>
<div class="c" style="top:312.81px;left:106px;width:58.400000000000006px;text-align:center;">10</div>
<div class="c" style="top:312.81px;left:164.4px;width:47.70000000000002px;text-align:center;">1.010</div>
<div class="c" style="top:312.81px;left:216.1px;text-align:left;">Compaction</div>
<div class="c" style="top:312.81px;left:405.3px;width:49.900000000000034px;text-align:center;">1</div>
<div class="c" style="top:312.81px;left:455.2px;width:42.799999999999955px;text-align:center;">LS</div>
<div class="c" style="top:312.81px;left:498px;width:71.0px;text-align:right;">500</div>
<div class="c" style="top:312.81px;left:573px;width:58.0px;text-align:right;">$500.00</div>
<div class="c" style="top:312.81px;left:635px;width:71.0px;text-align:right;">500</div>
<div class="c" style="top:312.81px;left:710px;width:58.5px;text-align:right;">$500.00</div>
<div class="c" style="top:312.81px;left:834.8px;width:58.700000000000045px;text-align:right;">$0.00</div>
<div class="c" style="top:328.90px;left:106px;width:58.400000000000006px;text-align:center;">11</div>
<div class="c" style="top:328.90px;left:164.4px;width:47.70000000000002px;text-align:center;">1.011</div>
<div class="c" style="top:328.90px;left:216.1px;text-align:left;">Top Soil</div>
<div class="c" style="top:328.90px;left:405.3px;width:49.900000000000034px;text-align:center;">200</div>
<div class="c" style="top:328.90px;left:455.2px;width:42.799999999999955px;text-align:center;">CY</div>
<div class="c" style="top:328.90px;left:498px;width:71.0px;text-align:right;">1.25</div>
<div class="c" style="top:328.90px;left:573px;width:58.0px;text-align:right;">$250.00</div>
<div class="c" style="top:328.90px;left:635px;width:71.0px;text-align:right;">1.25</div>
<div class="c" style="top:328.90px;left:710px;width:58.5px;text-align:right;">$250.00</div>
<div class="c" style="top:328.90px;left:834.8px;width:58.700000000000045px;text-align:right;">$0.00</div>
<div class="c" style="top:344.99px;left:106px;width:58.400000000000006px;text-align:center;">12</div>
<div class="c" style="top:344.99px;left:164.4px;width:47.70000000000002px;text-align:center;">1.012</div>
<div class="c" style="top:344.99px;left:216.1px;text-align:left;">Finish Grading</div>
<div class="c" style="top:344.99px;left:405.3px;width:49.900000000000034px;text-align:center;">1</div>
<div class="c" style="top:344.99px;left:455.2px;width:42.799999999999955px;text-align:center;">LS</div>
<div class="c" style="top:344.99px;left:498px;width:71.0px;text-align:right;">590</div>
<div class="c" style="top:344.99px;left:573px;width:58.0px;text-align:right;">$590.00</div>
<div class="c" style="top:344.99px;left:635px;width:71.0px;text-align:right;">600</div>
<div class="c" style="top:344.99px;left:710px;width:58.5px;text-align:right;">$600.00</div>
<div class="c" style="top:344.99px;left:834.8px;width:58.700000000000045px;text-align:right;">$0.00</div>
<div class="c" style="top:361.08px;left:106px;width:58.400000000000006px;text-align:center;">13</div>
<div class="c" style="top:361.08px;left:164.4px;width:47.70000000000002px;text-align:center;">1.013</div>
<div class="c" style="top:361.08px;left:216.1px;text-align:left;">Seeding/Sod</div>
<div class="c" style="top:361.08px;left:405.3px;width:49.900000000000034px;text-align:center;">100</div>
<div class="c" style="top:361.08px;left:455.2px;width:42.799999999999955px;text-align:center;">CY</div>
<div class="c" style="top:361.08px;left:573px;width:58.0px;text-align:right;">$0.00</div>
<div class="c" style="top:361.08px;left:710px;width:58.5px;text-align:right;">$0.00</div>
<div class="c" style="top:361.08px;left:834.8px;width:58.700000000000045px;text-align:right;">$0.00</div>
<div class="c" style="top:377.17px;left:106px;width:58.400000000000006px;text-align:center;">14</div>
<div class="c" style="top:377.17px;left:164.4px;width:47.70000000000002px;text-align:center;">2.001</div>
<div class="c" style="top:377.17px;left:216.1px;text-align:left;">Footings/Pads</div>
<div class="c" style="top:377.17px;left:405.3px;width:49.900000000000034px;text-align:center;">4</div>
<div class="c" style="top:377.17px;left:455.2px;width:42.799999999999955px;text-align:center;">EA</div>
<div class="c" style="top:377.17px;left:573px;width:58.0px;text-align:right;">$0.00</div>
<div class="c" style="top:377.17px;left:710px;width:58.5px;text-align:right;">$0.00</div>
<div class="c" style="top:377.17px;left:834.8px;width:58.700000000000045px;text-align:right;">$0.00</div>
</div>
<div class="abs" style="left:0;top:116px;width:893px;height:10px;background:#f2f2f2;border-bottom:1px solid #dedede"></div>
<div class="abs" style="left:29.400000000000006px;top:116px;width:1px;height:9.5px;background:#e0e0e0"></div>
<div class="abs" style="left:41.900000000000006px;top:116px;width:1px;height:9.5px;background:#e0e0e0"></div>
<div class="abs" style="left:54.900000000000006px;top:116px;width:1px;height:9.5px;background:#e0e0e0"></div>
<div class="abs" style="left:67.5px;top:116px;width:1px;height:9.5px;background:#e0e0e0"></div>
<div class="abs" style="left:80.19999999999999px;top:116px;width:1px;height:9.5px;background:#e0e0e0"></div>
<div class="abs" style="left:105.5px;top:116px;width:1px;height:9.5px;background:#e0e0e0"></div>
<div class="abs" style="left:163.9px;top:116px;width:1px;height:9.5px;background:#e0e0e0"></div>
<div class="abs" style="left:211.60000000000002px;top:116px;width:1px;height:9.5px;background:#e0e0e0"></div>
<div class="abs" style="left:404.8px;top:116px;width:1px;height:9.5px;background:#e0e0e0"></div>
<div class="abs" style="left:454.70000000000005px;top:116px;width:1px;height:9.5px;background:#e0e0e0"></div>
<div class="abs" style="left:497.5px;top:116px;width:1px;height:9.5px;background:#e0e0e0"></div>
<div class="abs" style="left:572.5px;top:116px;width:1px;height:9.5px;background:#e0e0e0"></div>
<div class="abs" style="left:634.5px;top:116px;width:1px;height:9.5px;background:#e0e0e0"></div>
<div class="abs" style="left:709.5px;top:116px;width:1px;height:9.5px;background:#e0e0e0"></div>
<div class="abs" style="left:772.0px;top:116px;width:1px;height:9.5px;background:#e0e0e0"></div>
<div class="abs" style="left:834.3px;top:116px;width:1px;height:9.5px;background:#e0e0e0"></div>
<div class="abs" style="left:887.5px;top:126px;width:5.5px;height:400px;background:#f4f4f4;border-left:1px solid #ddd"></div>
<div class="abs" style="left:889.3px;top:128.3px;width:2.7px;height:54.5px;background:#aeaeae;border-radius:1.5px"></div>
</div></body></html>
